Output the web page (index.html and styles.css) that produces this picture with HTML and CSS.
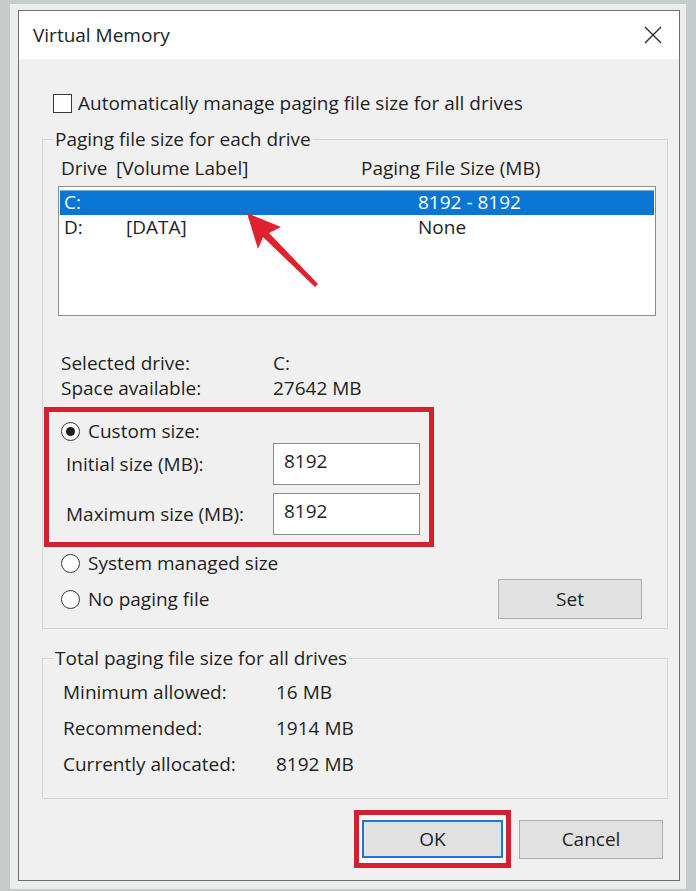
FILE: index.html
```html
<!DOCTYPE html>
<html>
<head>
<meta charset="utf-8">
<title>Virtual Memory</title>
<link rel="stylesheet" href="styles.css">
</head>
<body>
<div class="glow">
  <div class="window">
    <div class="titlebar">
      <span class="title">Virtual Memory</span>
      <svg class="close" width="18" height="18" viewBox="0 0 18 18"><path d="M1 1L17 17M17 1L1 17" stroke="#2a2a2a" stroke-width="1.4" fill="none"/></svg>
    </div>
    <div class="content">
      <div class="check-row">
        <span class="checkbox"></span>
        <span>Automatically manage paging file size for all drives</span>
      </div>

      <fieldset class="group group-drives">
        <legend>Paging file size for each drive</legend>
        <div class="list-header">
          <span class="col-drive">Drive</span><span class="col-label">[Volume Label]</span><span class="col-size">Paging File Size (MB)</span>
        </div>
        <div class="listbox">
          <div class="list-row selected"><span class="c1">C:</span><span class="c2"></span><span class="c3">8192 - 8192</span></div>
          <div class="list-row"><span class="c1">D:</span><span class="c2">[DATA]</span><span class="c3">None</span></div>
        </div>
        <div class="info">
          <div class="info-row"><span class="info-label">Selected drive:</span><span>C:</span></div>
          <div class="info-row"><span class="info-label">Space available:</span><span>27642 MB</span></div>
        </div>
        <div class="highlight custom">
          <div class="radio-row first">
            <span class="radio checked"></span><span>Custom size:</span>
          </div>
          <div class="field-row">
            <span class="field-label">Initial size (MB):</span>
            <span class="textbox">8192</span>
          </div>
          <div class="field-row second">
            <span class="field-label">Maximum size (MB):</span>
            <span class="textbox">8192</span>
          </div>
        </div>
        <div class="radio-row system">
          <span class="radio"></span><span>System managed size</span>
        </div>
        <div class="nopage-row">
          <div class="radio-row"><span class="radio"></span><span>No paging file</span></div>
          <span class="btn btn-set">Set</span>
        </div>
      </fieldset>

      <fieldset class="group group-total">
        <legend>Total paging file size for all drives</legend>
        <div class="total-row"><span class="total-label">Minimum allowed:</span><span>16 MB</span></div>
        <div class="total-row"><span class="total-label">Recommended:</span><span>1914 MB</span></div>
        <div class="total-row"><span class="total-label">Currently allocated:</span><span>8192 MB</span></div>
      </fieldset>

      <div class="buttons">
        <div class="highlight ok-wrap"><span class="btn btn-ok">OK</span></div>
        <span class="btn btn-cancel">Cancel</span>
      </div>
    </div>
  </div>
</div>
<svg class="arrow" width="696" height="891" viewBox="0 0 696 891">
  <polygon points="247,213 281,227 269,233 318,284 315,287 263,237 258,249" fill="#e0222e"/>
</svg>
</body>
</html>
```

FILE: styles.css
```css
html, body {
  margin: 0;
  padding: 0;
}
body {
  background: #c5cccb;
  font-family: "Open Sans", "Noto Sans", sans-serif;
  font-size: 19px;
  color: #1f1f1f;
  width: 696px;
  height: 891px;
  overflow: hidden;
  position: relative;
}
.glow {
  margin: 4px 0 0 10px;
  width: 676px;
  height: 885px;
  padding: 6px 0 0 8px;
  box-sizing: border-box;
  background: #eceeed;
}
.window {
  width: 662px;
  height: 871px;
  box-sizing: border-box;
  border: 1px solid #6f6f6f;
  background: #f0f0f0;
  display: flex;
  flex-direction: column;
}
.titlebar {
  height: 48px;
  background: #ffffff;
  display: flex;
  align-items: center;
  justify-content: space-between;
  padding: 0 17px 0 14px;
  flex: none;
}
.title {
  font-size: 19px;
  color: #222;
  padding-bottom: 1px;
}
.close {
  display: block;
}
.content {
  padding: 0;
}
.check-row {
  display: flex;
  align-items: center;
  height: 24px;
  line-height: 24px;
  margin: 32px 0 0 34px;
  gap: 6px;
}
.checkbox {
  width: 17px;
  height: 17px;
  border: 1.5px solid #3a3a3a;
  background: #fdfdfd;
  flex: none;
}
.group {
  margin: 0 0 0 23px;
  width: 626px;
  box-sizing: border-box;
  border: 1px solid #d6d6d6;
  padding: 0;
  min-width: 0;
}
.group legend {
  margin-left: 10px;
  padding: 0 2px;
  line-height: 24px;
  height: 24px;
}
.group-drives {
  margin-top: 12px;
  padding-bottom: 9px;
}
.list-header {
  display: flex;
  line-height: 24px;
  height: 24px;
  margin-top: 5px;
  padding-left: 18px;
}
.col-drive {
  width: 55px;
}
.col-label {
  width: 245px;
}
.listbox {
  margin: 6px 0 0 15px;
  width: 598px;
  height: 130px;
  box-sizing: border-box;
  border: 1px solid #8c8c8c;
  background: #ffffff;
  padding: 3px 1px 0 1px;
}
.list-row {
  display: flex;
  height: 25px;
  line-height: 25px;
  padding-left: 4px;
}
.list-row.selected {
  background: #0a76d4;
  color: #ffffff;
  box-shadow: inset 0 1px 0 #6bb3ec;
}
.c1 {
  width: 62px;
}
.c2 {
  width: 292px;
}
.info {
  margin-top: 35px;
  padding-left: 18px;
}
.info-row {
  display: flex;
  height: 25px;
  line-height: 25px;
}
.info-label {
  width: 212px;
}
.highlight {
  border: 5px solid #d41f2f;
  box-sizing: border-box;
}
.custom {
  margin: 6px 0 0 1px;
  width: 390px;
  height: 140px;
  padding: 7px 0 0 0;
}
.radio-row {
  display: flex;
  align-items: center;
  height: 24px;
  line-height: 24px;
  gap: 8px;
}
.custom .radio-row.first {
  padding-left: 12px;
}
.radio {
  width: 17px;
  height: 17px;
  border: 1.5px solid #3a3a3a;
  border-radius: 50%;
  background: #fdfdfd;
  flex: none;
  display: flex;
  align-items: center;
  justify-content: center;
}
.radio.checked::after {
  content: "";
  width: 9px;
  height: 9px;
  border-radius: 50%;
  background: #1e1e1e;
}
.field-row {
  display: flex;
  align-items: center;
  height: 42px;
}
.field-row.second {
  margin-top: 8px;
}
.field-label {
  width: 207px;
  padding-left: 17px;
  flex: none;
}
.textbox {
  width: 147px;
  height: 42px;
  box-sizing: border-box;
  border: 1.5px solid #8a8a8a;
  background: #ffffff;
  padding: 4px 0 0 10px;
  line-height: 26px;
}
.radio-row.system {
  margin: 4px 0 0 18px;
}
.nopage-row {
  display: flex;
  align-items: center;
  justify-content: space-between;
  margin: 4px 25px 0 18px;
  height: 40px;
}
.btn {
  display: flex;
  align-items: center;
  justify-content: center;
  box-sizing: border-box;
  background: #e1e1e1;
  border: 1px solid #adadad;
}
.btn-set {
  width: 144px;
  height: 40px;
}
.group-total {
  margin-top: 17px;
  padding-bottom: 16px;
}
.total-row {
  display: flex;
  height: 36px;
  line-height: 36px;
  padding-left: 20px;
}
.group-total .total-row:first-of-type {
  margin-top: 4px;
}
.total-label {
  width: 213px;
}
.buttons {
  display: flex;
  justify-content: flex-end;
  align-items: center;
  gap: 8px;
  margin: 11px 16px 0 0;
}
.ok-wrap {
  width: 157px;
  height: 58px;
  padding: 5px 3px;
  background: #fafafa;
}
.btn-ok {
  width: 100%;
  height: 100%;
  border: 2px solid #1f78c8;
  box-shadow: inset 0 0 0 1px #cfe6f7;
}
.btn-cancel {
  width: 144px;
  height: 39px;
}
.arrow {
  position: absolute;
  left: 0;
  top: 0;
  pointer-events: none;
}
```
